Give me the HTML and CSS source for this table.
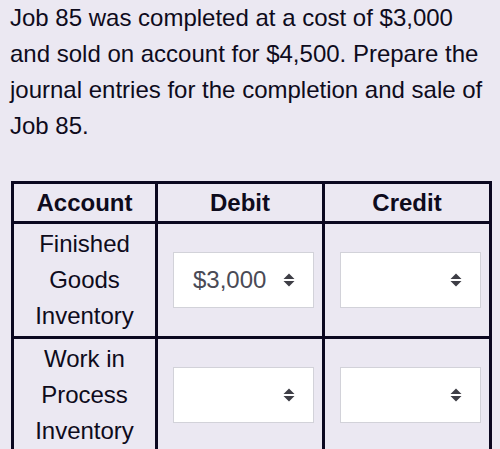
FILE: index.html
```html
<!DOCTYPE html>
<html>
<head>
<meta charset="utf-8">
<link rel="stylesheet" href="styles.css">
</head>
<body>
<p class="question">Job 85 was completed at a cost of $3,000 and sold on account for $4,500. Prepare the journal entries for the completion and sale of Job 85.</p>
<table class="journal">
  <thead>
    <tr>
      <th class="col-account">Account</th>
      <th class="col-amount">Debit</th>
      <th class="col-amount">Credit</th>
    </tr>
  </thead>
  <tbody>
    <tr>
      <td class="account">Finished Goods Inventory</td>
      <td class="amount">
        <div class="select"><span class="value">$3,000</span>
          <svg class="arrows" width="12" height="14" viewBox="0 0 12 14"><path d="M6 0.5 L11.5 6 H0.5 Z M0.5 8 H11.5 L6 13.5 Z" fill="#3e3e46"/></svg>
        </div>
      </td>
      <td class="amount">
        <div class="select"><span class="value"></span>
          <svg class="arrows" width="12" height="14" viewBox="0 0 12 14"><path d="M6 0.5 L11.5 6 H0.5 Z M0.5 8 H11.5 L6 13.5 Z" fill="#3e3e46"/></svg>
        </div>
      </td>
    </tr>
    <tr>
      <td class="account">Work in Process Inventory</td>
      <td class="amount">
        <div class="select"><span class="value"></span>
          <svg class="arrows" width="12" height="14" viewBox="0 0 12 14"><path d="M6 0.5 L11.5 6 H0.5 Z M0.5 8 H11.5 L6 13.5 Z" fill="#3e3e46"/></svg>
        </div>
      </td>
      <td class="amount">
        <div class="select"><span class="value"></span>
          <svg class="arrows" width="12" height="14" viewBox="0 0 12 14"><path d="M6 0.5 L11.5 6 H0.5 Z M0.5 8 H11.5 L6 13.5 Z" fill="#3e3e46"/></svg>
        </div>
      </td>
    </tr>
  </tbody>
</table>
</body>
</html>
```
FILE: styles.css
```css
html, body {
  margin: 0;
  padding: 0;
  background: #ebe8f2;
}
body {
  font-family: "Liberation Sans", Arial, sans-serif;
  font-size: 24px;
  color: #0e0b1c;
}
.question {
  margin: 0;
  padding: 0 10px;
  line-height: 36px;
}
.journal {
  margin: 37px 0 0 11px;
  border-collapse: separate;
  border-spacing: 0;
  border-top: 3px solid #0b0820;
  border-left: 3px solid #0b0820;
}
.journal th, .journal td {
  border-right: 3px solid #0b0820;
  border-bottom: 3px solid #0b0820;
  padding: 0;
}
.journal th {
  font-weight: bold;
  line-height: 37px;
  text-align: center;
}
.col-account { width: 141px; }
.col-amount { width: 164px; }
.account {
  width: 141px;
  text-align: center;
  line-height: 36px;
  padding: 2px 0 !important;
  vertical-align: middle;
}
.amount {
  width: 164px;
  vertical-align: middle;
  padding: 0 8px 0 15px !important;
  box-sizing: border-box;
}
.select {
  box-sizing: border-box;
  width: 141px;
  height: 56px;
  background: #fff;
  border: 1px solid #d2d2d9;
  display: flex;
  align-items: center;
  justify-content: space-between;
  padding: 0 18px 0 19px;
}
.value {
  color: #4a4a55;
  line-height: 24px;
}
.arrows {
  display: block;
  flex: none;
}
```
